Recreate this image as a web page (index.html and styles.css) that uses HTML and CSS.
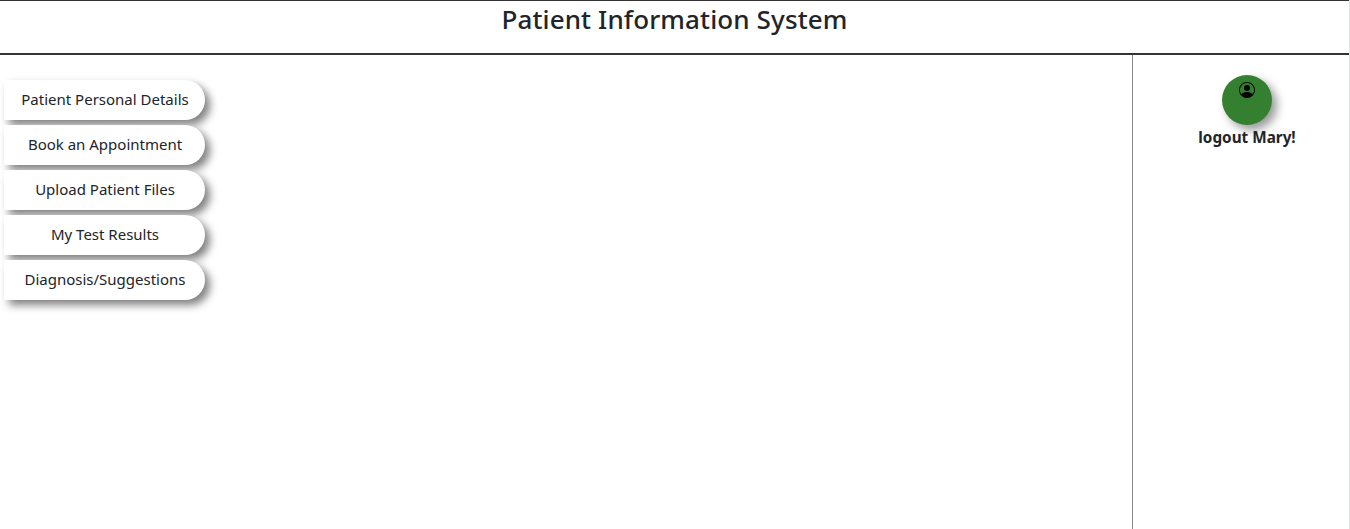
FILE: index.html
```html
<!DOCTYPE html>
<html lang="en">
<head>
<meta charset="utf-8">
<title>Patient Information System</title>
<link rel="stylesheet" href="styles.css">
</head>
<body>
<header class="header"><h1 class="title">Patient Information System</h1></header>
<main class="main">
  <nav class="menu">
    <button class="menu-btn">Patient Personal Details</button>
    <button class="menu-btn">Book an Appointment</button>
    <button class="menu-btn">Upload Patient Files</button>
    <button class="menu-btn">My Test Results</button>
    <button class="menu-btn">Diagnosis/Suggestions</button>
  </nav>
  <aside class="side">
    <button class="avatar" aria-label="logout">
      <svg class="avatar-icon" viewBox="0 0 16 16" width="16" height="16" fill="currentColor">
        <path d="M11 6a3 3 0 1 1-6 0 3 3 0 0 1 6 0z"/>
        <path fill-rule="evenodd" d="M0 8a8 8 0 1 1 16 0A8 8 0 0 1 0 8zm8-7a7 7 0 0 0-5.468 11.37C3.242 11.226 4.805 10 8 10s4.757 1.225 5.468 2.37A7 7 0 0 0 8 1z"/>
      </svg>
    </button>
    <div class="logout">logout Mary!</div>
  </aside>
</main>
</body>
</html>
```
FILE: styles.css
```css
* { box-sizing: border-box; }
html, body { height: 100%; }
body {
  margin: 0;
  background: #fff;
  color: #212529;
  font-family: "Noto Sans", "Open Sans", sans-serif;
  display: flex;
  flex-direction: column;
  overflow: hidden;
  border-right: 1px solid #dee2e6;
}
.header {
  height: 55px;
  border-top: 1px solid #333;
  border-bottom: 2px solid #333;
  text-align: center;
}
.title {
  margin: 0;
  font-size: 26px;
  letter-spacing: 0.12px;
  font-weight: 500;
  line-height: 36px;
}
.main { flex: 1; display: flex; min-height: 0; }
.menu {
  flex: 1;
  display: flex;
  flex-direction: column;
  align-items: flex-start;
  gap: 5px;
  padding: 25px 0 0 4px;
}
.menu-btn {
  width: 201px;
  height: 40px;
  padding: 0 0 2px 1px;
  border: 0;
  border-radius: 0 20px 20px 0;
  background: #fff;
  color: #212529;
  font: 400 15px "Noto Sans", sans-serif;
  box-shadow: 5px 5px 8px #808080;
}
.side {
  width: 217px;
  border-left: 1px solid #888;
  display: flex;
  flex-direction: column;
  align-items: center;
  padding: 20px 0 0 12px;
}
.avatar {
  width: 50px;
  height: 50px;
  padding: 7px 0 0;
  border: 0;
  border-radius: 50%;
  background: #358030;
  color: #000;
  display: flex;
  justify-content: center;
  align-items: flex-start;
  box-shadow: 5px 5px 10px #999;
}
.avatar-icon { display: block; }
.logout {
  margin-top: 2px;
  font-size: 15.3px;
  font-weight: 700;
  line-height: 20px;
}
```
